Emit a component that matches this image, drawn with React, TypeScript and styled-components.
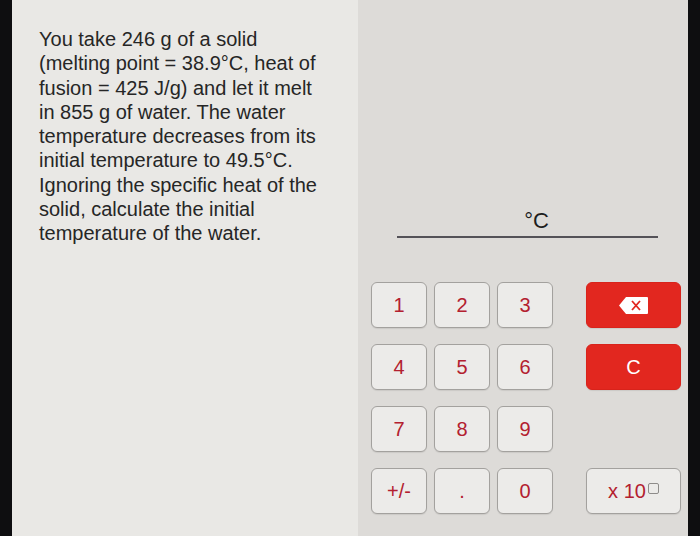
import React from "react";
import styled, { createGlobalStyle } from "styled-components";

const GlobalStyle = createGlobalStyle`
  html, body {
    margin: 0;
    padding: 0;
    background: #0e0e10;
  }
`;

const Screen = styled.div`
  display: flex;
  width: 700px;
  height: 536px;
  padding: 0 12px;
  box-sizing: border-box;
  background: #0e0e10;
  font-family: "Liberation Sans", Arial, sans-serif;
`;

const QuestionPanel = styled.div`
  width: 346px;
  background: #e9e8e5;
  padding: 27px 0 0 27px;
  box-sizing: border-box;
`;

const Question = styled.p`
  margin: 0;
  font-size: 20px;
  line-height: 24.3px;
  color: #262626;
`;

const Line = styled.span`
  display: block;
  white-space: nowrap;
`;

const AnswerPanel = styled.div`
  flex: 1;
  background: #dddbd8;
  display: flex;
  flex-direction: column;
  padding: 204px 0 0 13px;
  box-sizing: border-box;
`;

const AnswerField = styled.div`
  margin-left: 26px;
  width: 261px;
  height: 34px;
  border-bottom: 2px solid #545258;
  display: flex;
  justify-content: center;
  align-items: flex-end;
  padding-left: 18px;
  box-sizing: border-box;
`;

const Unit = styled.span`
  font-size: 22px;
  line-height: 30px;
  color: #1e1e1e;
`;

const Keypad = styled.div`
  display: flex;
  gap: 33px;
  margin-top: 44px;
`;

const DigitGrid = styled.div`
  display: grid;
  grid-template-columns: repeat(3, 56px);
  grid-auto-rows: 46px;
  column-gap: 7px;
  row-gap: 16px;
`;

const SideColumn = styled.div`
  display: grid;
  grid-template-columns: 95px;
  grid-template-rows: repeat(4, 46px);
  row-gap: 16px;
`;

const Key = styled.button<{ $red?: boolean; $row?: number }>`
  box-sizing: border-box;
  margin: 0;
  padding: 0;
  border-radius: 6px;
  border: 1px solid ${(p) => (p.$red ? "#d8231b" : "#a3a19e")};
  background: ${(p) => (p.$red ? "#e2271f" : "#ecebe9")};
  color: ${(p) => (p.$red ? "#ffffff" : "#b3202f")};
  font-family: "Liberation Sans", Arial, sans-serif;
  font-size: 20px;
  display: flex;
  align-items: center;
  justify-content: center;
  box-shadow: 0 1px 1px rgba(0, 0, 0, 0.08);
  ${(p) => (p.$row ? `grid-row: ${p.$row};` : "")}
`;

const Superscript = styled.span`
  display: inline-block;
  width: 11px;
  height: 11px;
  border: 1.5px solid #8e8c8a;
  border-radius: 2px;
  margin-left: 2px;
  margin-bottom: 6px;
  box-sizing: border-box;
  align-self: center;
`;

const BackspaceIcon = () => (
  <svg width="31" height="19" viewBox="0 0 31 19">
    <path d="M8 1 H29 a1 1 0 0 1 1 1 V17 a1 1 0 0 1 -1 1 H8 L1 9.5 Z" fill="#fff" />
    <path d="M14 5 L22 14 M22 5 L14 14" stroke="#e2271f" strokeWidth="1.8" />
  </svg>
);

const lines = [
  "You take 246 g of a solid",
  "(melting point = 38.9°C, heat of",
  "fusion = 425 J/g) and let it melt",
  "in 855 g of water. The water",
  "temperature decreases from its",
  "initial temperature to 49.5°C.",
  "Ignoring the specific heat of the",
  "solid, calculate the initial",
  "temperature of the water.",
];

const digits = ["1", "2", "3", "4", "5", "6", "7", "8", "9", "+/-", ".", "0"];

const App = () => {
  return (
    <Screen>
      <GlobalStyle />
      <QuestionPanel>
        <Question>
          {lines.map((l) => (
            <Line key={l}>{l}</Line>
          ))}
        </Question>
      </QuestionPanel>
      <AnswerPanel>
        <AnswerField>
          <Unit>°C</Unit>
        </AnswerField>
        <Keypad>
          <DigitGrid>
            {digits.map((d) => (
              <Key key={d}>{d}</Key>
            ))}
          </DigitGrid>
          <SideColumn>
            <Key $red $row={1} aria-label="backspace">
              <BackspaceIcon />
            </Key>
            <Key $red $row={2}>C</Key>
            <Key $row={4}>
              x 10
              <Superscript />
            </Key>
          </SideColumn>
        </Keypad>
      </AnswerPanel>
    </Screen>
  );
};

export default App;
